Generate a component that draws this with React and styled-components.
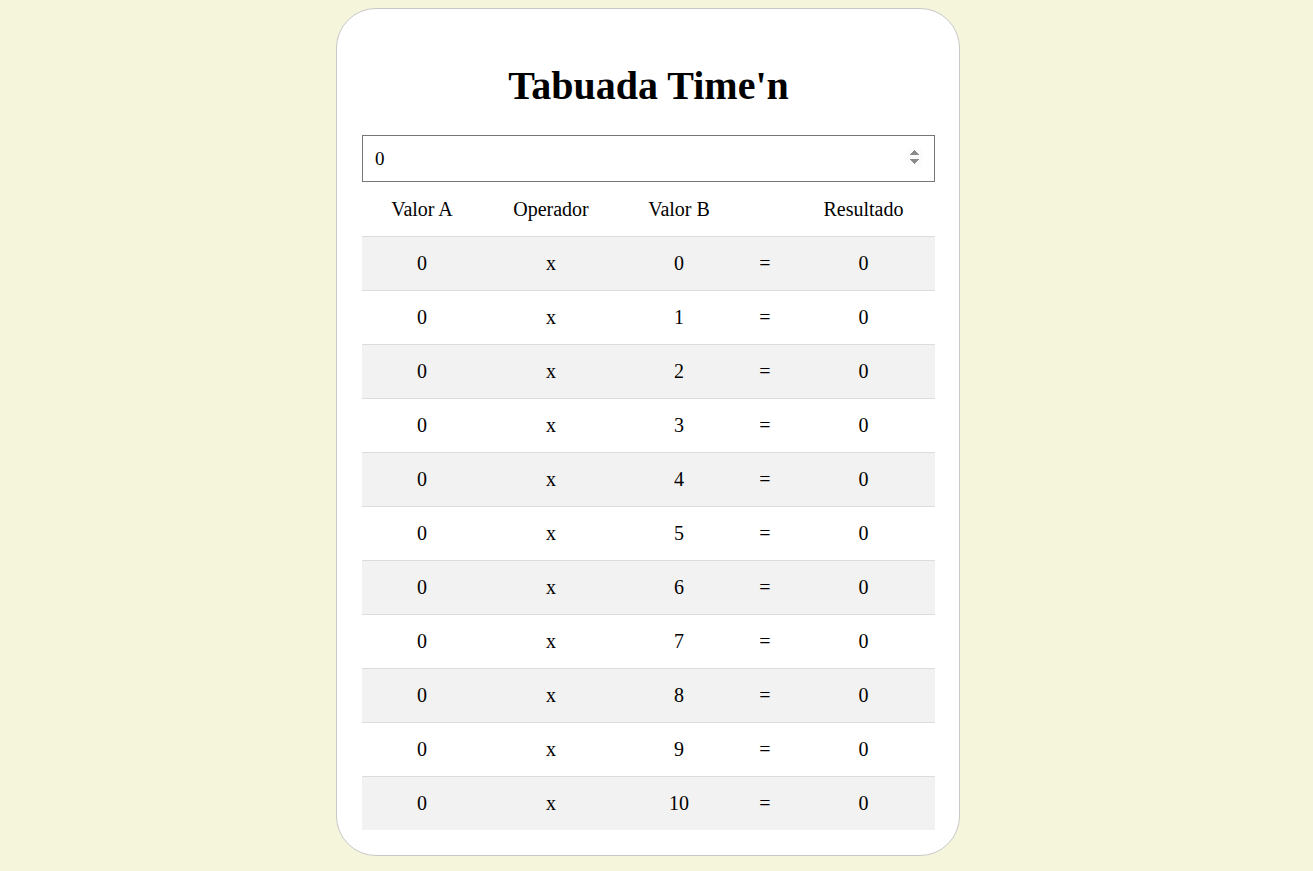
import { useState } from "react";
import styled, { createGlobalStyle } from "styled-components";

const GlobalStyle = createGlobalStyle`
    body{
        margin: 0;
        background: #f5f5dc;
        font-family: "Liberation Serif", "Times New Roman", serif;
        color: #000;
    }
`

const columns = [
    { title: "Valor A", width: 120 },
    { title: "Operador", width: 138 },
    { title: "Valor B", width: 118 },
    { title: "", width: 54 },
    { title: "Resultado", width: 143 },
];

export default function App() {
    const [ value, setValue ] = useState(0);
    const rows = Array.from({ length: 11 }, (_, i) => i);
    const a = Number(value) || 0;

    return(
        <>
            <GlobalStyle/>
            <Page>
                <Card>
                    <Title>Tabuada Time'n</Title>
                    <NumberInput type="number" value={value} onChange={(e) => setValue(e.target.value)}/>
                    <Table>
                        <colgroup>
                            {columns.map((c, i) => <col key={i} style={{ width: c.width }}/>)}
                        </colgroup>
                        <thead>
                            <tr>
                                {columns.map((c, i) => <HeadCell key={i}>{c.title}</HeadCell>)}
                            </tr>
                        </thead>
                        <tbody>
                            {rows.map((b) => (
                                <Row key={b} $striped={b % 2 === 0}>
                                    <Cell>{a}</Cell>
                                    <Cell>x</Cell>
                                    <Cell>{b}</Cell>
                                    <Cell>=</Cell>
                                    <Cell>{a * b}</Cell>
                                </Row>
                            ))}
                        </tbody>
                    </Table>
                </Card>
            </Page>
        </>
    )
}

const Page = styled.div`
    display: flex;
    justify-content: center;
    padding: 8px 17px 16px 0;
`

const Card = styled.div`
    width: 573px;
    background: #fff;
    border: 1px solid #c8c8c8;
    border-radius: 40px;
    padding: 27px 24px 25px 25px;
`

const Title = styled.h1`
    margin: 27px 0 26px 0;
    text-align: center;
    font-size: 40px;
    font-weight: 700;
    line-height: 46px;
`

const NumberInput = styled.input`
    box-sizing: border-box;
    display: block;
    width: 100%;
    height: 47px;
    padding: 0 12px;
    border: 1px solid #767676;
    font-family: "Liberation Serif", "Times New Roman", serif;
    font-size: 19px;
    outline: none;
    &::-webkit-inner-spin-button{
        opacity: 1;
        height: 18px;
    }
`

const Table = styled.table`
    width: 100%;
    border-collapse: collapse;
    table-layout: fixed;
`

const HeadCell = styled.th`
    height: 54px;
    padding: 0;
    font-size: 20px;
    font-weight: 400;
    text-align: center;
`

const Row = styled.tr`
    background: ${(p) => p.$striped ? "#f2f2f2" : "#fff"};
    border-top: 1px solid #dcdcdc;
`

const Cell = styled.td`
    height: 53px;
    padding: 0;
    font-size: 20px;
    text-align: center;
`
